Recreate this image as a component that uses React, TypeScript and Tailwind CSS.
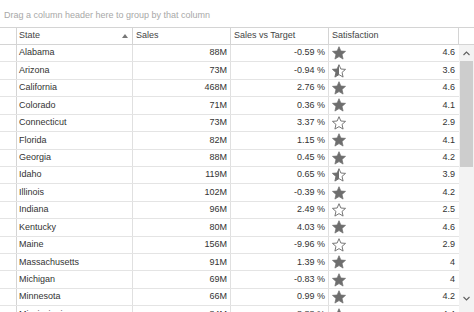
import React from 'react';

interface Row { state: string; sales: string; target: string; sat: string; }

const rows: Row[] = [
  { state: 'Alabama', sales: '88M', target: '-0.59 %', sat: '4.6' },
  { state: 'Arizona', sales: '73M', target: '-0.94 %', sat: '3.6' },
  { state: 'California', sales: '468M', target: '2.76 %', sat: '4.6' },
  { state: 'Colorado', sales: '71M', target: '0.36 %', sat: '4.1' },
  { state: 'Connecticut', sales: '73M', target: '3.37 %', sat: '2.9' },
  { state: 'Florida', sales: '82M', target: '1.15 %', sat: '4.1' },
  { state: 'Georgia', sales: '88M', target: '0.45 %', sat: '4.2' },
  { state: 'Idaho', sales: '119M', target: '0.65 %', sat: '3.9' },
  { state: 'Illinois', sales: '102M', target: '-0.39 %', sat: '4.2' },
  { state: 'Indiana', sales: '96M', target: '2.49 %', sat: '2.5' },
  { state: 'Kentucky', sales: '80M', target: '4.03 %', sat: '4.6' },
  { state: 'Maine', sales: '156M', target: '-9.96 %', sat: '2.9' },
  { state: 'Massachusetts', sales: '91M', target: '1.39 %', sat: '4' },
  { state: 'Michigan', sales: '69M', target: '-0.83 %', sat: '4' },
  { state: 'Minnesota', sales: '66M', target: '0.99 %', sat: '4.2' },
  { state: 'Mississippi', sales: '84M', target: '8.88 %', sat: '4.4' },
];

const STAR = 'M6 0.6 L7.6 4.3 L11.6 4.6 L8.6 7.2 L9.5 11.2 L6 9.1 L2.5 11.2 L3.4 7.2 L0.4 4.6 L4.4 4.3 Z';

function Star({ value }: { value: number }) {
  const kind = value >= 4 ? 'full' : value >= 3.5 ? 'half' : 'empty';
  return (
    <svg width="14" height="14" viewBox="0 0 12 12" className="shrink-0">
      <defs>
        <clipPath id="left-half"><rect x="0" y="0" width="6" height="12" /></clipPath>
      </defs>
      {kind === 'full' && <path d={STAR} fill="#6e6e6e" stroke="#6e6e6e" strokeWidth="0.6" strokeLinejoin="round" />}
      {kind === 'half' && (
        <>
          <path d={STAR} fill="#6e6e6e" clipPath="url(#left-half)" />
          <path d={STAR} fill="none" stroke="#6e6e6e" strokeWidth="0.8" strokeLinejoin="round" />
        </>
      )}
      {kind === 'empty' && <path d={STAR} fill="none" stroke="#6e6e6e" strokeWidth="0.8" strokeLinejoin="round" />}
    </svg>
  );
}

export default function App() {
  return (
    <div className="w-[474px] h-[312px] overflow-hidden bg-white text-[9px] text-[#333]" style={{ fontFamily: '"Liberation Sans", Arial, sans-serif' }}>
      <div className="h-[27px] pt-[10px] pl-[4px] leading-[10px] text-[#a8a8a8]">Drag a column header here to group by that column</div>

      <div className="grid grid-cols-[17px_116px_98px_98px_130px_15px] h-[18px] border-y border-[#d4d4d4] text-[#444]">
        <div className="border-r border-[#d4d4d4]" />
        <div className="flex items-center justify-between pl-[2px] pr-[4px] border-r border-[#d4d4d4]">
          <span>State</span>
          <svg width="6" height="4" viewBox="0 0 6 4"><path d="M3 0 L6 4 L0 4 Z" fill="#777" /></svg>
        </div>
        <div className="flex items-center pl-[3px] border-r border-[#d4d4d4]">Sales</div>
        <div className="flex items-center pl-[3px] border-r border-[#d4d4d4]">Sales vs Target</div>
        <div className="flex items-center pl-[3px] border-r border-[#d4d4d4]">Satisfaction</div>
        <div />
      </div>

      <div className="flex">
        <div className="w-[459px]">
          {rows.map(r => (
            <div key={r.state} className="grid grid-cols-[17px_116px_98px_98px_130px] h-[17.43px] border-b border-[#e4e4e4]">
              <div className="border-r border-[#d4d4d4]" />
              <div className="flex items-center pl-[2px] border-r border-[#e0e0e0]">{r.state}</div>
              <div className="flex items-center justify-end pr-[3px] border-r border-[#e0e0e0]">{r.sales}</div>
              <div className="flex items-center justify-end pr-[3px] border-r border-[#e0e0e0]">{r.target}</div>
              <div className="flex items-center justify-between pl-[3px] pr-[4px]">
                <Star value={Number(r.sat)} />
                <span>{r.sat}</span>
              </div>
            </div>
          ))}
        </div>
        <div className="w-[15px] h-[267px] bg-[#f3f3f3] flex flex-col">
          <div className="h-[16px] flex items-center justify-center">
            <svg width="7" height="5" viewBox="0 0 7 5"><path d="M0.5 4 L3.5 1 L6.5 4" fill="none" stroke="#606060" strokeWidth="1.1" /></svg>
          </div>
          <div className="h-[106px] mx-[1px] bg-[#cdcdcd]" />
          <div className="flex-1" />
          <div className="h-[16px] flex items-center justify-center mb-[6px]">
            <svg width="7" height="5" viewBox="0 0 7 5"><path d="M0.5 1 L3.5 4 L6.5 1" fill="none" stroke="#606060" strokeWidth="1.1" /></svg>
          </div>
        </div>
      </div>
    </div>
  );
}
